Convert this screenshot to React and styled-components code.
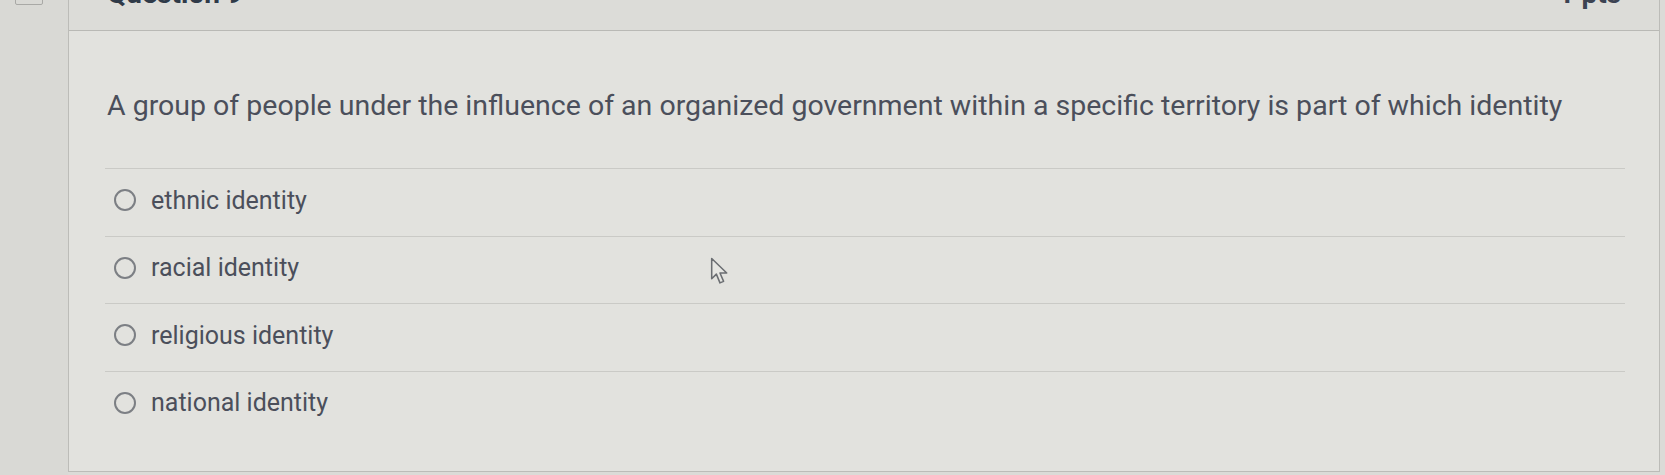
import React from "react";
import styled, { createGlobalStyle } from "styled-components";

const GlobalStyle = createGlobalStyle`
  html, body {
    margin: 0;
    padding: 0;
    background: #dbdbd7;
    font-family: Roboto, "Liberation Sans", sans-serif;
  }
`;

const answers = [
  "ethnic identity",
  "racial identity",
  "religious identity",
  "national identity",
];

export default function App() {
  return (
    <>
      <GlobalStyle />
      <Page>
        <Sidebar>
          <FlagBox />
        </Sidebar>
        <Card>
          <CardHeader>
            <Title>Question 9</Title>
            <Points>1 pts</Points>
          </CardHeader>
          <CardBody>
            <QuestionText>
              A group of people under the influence of an organized government
              within a specific territory is part of which identity
            </QuestionText>
            <AnswerList>
              {answers.map((a) => (
                <AnswerRow key={a}>
                  <Radio />
                  <AnswerLabel>{a}</AnswerLabel>
                </AnswerRow>
              ))}
            </AnswerList>
          </CardBody>
        </Card>
        <Cursor viewBox="0 0 20 28">
          <path
            d="M1.5 1.5 L1.5 21 L6 16.5 L9.5 25 L13 23.5 L9.5 15.5 L16 15.5 Z"
            fill="#e6e6e2"
            stroke="#6b6e72"
            strokeWidth="1.5"
            strokeLinejoin="round"
          />
        </Cursor>
      </Page>
    </>
  );
}

const Page = styled.div`
  position: relative;
  display: flex;
  height: 475px;
  overflow: hidden;
`;

const Sidebar = styled.div`
  width: 68px;
  flex-shrink: 0;
  background: #d9d9d5;
`;

const FlagBox = styled.div`
  width: 26px;
  height: 20px;
  margin: -17px 0 0 15px;
  border: 1.5px solid #a9a9a6;
  border-radius: 2px;
`;

const Card = styled.div`
  flex: 1;
  margin-right: 5px;
  margin-bottom: 3px;
  display: flex;
  flex-direction: column;
  border-left: 1.5px solid #bcbcb8;
  border-right: 1.5px solid #bcbcb8;
  border-bottom: 1.5px solid #bcbcb8;
  background: #e2e2de;
`;

const CardHeader = styled.div`
  height: 30px;
  flex-shrink: 0;
  display: flex;
  justify-content: space-between;
  align-items: flex-start;
  padding: 0 38px 0 38px;
  background: #dcdcd8;
  border-bottom: 1.5px solid #b9b9b5;
  overflow: hidden;
`;

const Title = styled.div`
  margin-top: -20px;
  font-size: 28px;
  line-height: 28px;
  font-weight: 700;
  color: #2f3a48;
`;

const Points = styled.div`
  margin-top: -20px;
  font-size: 28px;
  line-height: 28px;
  font-weight: 700;
  color: #3c4352;
`;

const CardBody = styled.div`
  padding: 58px 34px 0 36px;
`;

const QuestionText = styled.p`
  margin: 0 0 0 2px;
  font-size: 28.5px;
  line-height: 34px;
  color: #4b4f5b;
  white-space: nowrap;
`;

const AnswerList = styled.div`
  margin-top: 45px;
  display: flex;
  flex-direction: column;
`;

const AnswerRow = styled.div`
  height: 67.5px;
  display: flex;
  align-items: center;
  gap: 15px;
  padding: 0 0 4px 9px;
  box-sizing: border-box;
  border-top: 1.5px solid #cacac6;
`;

const Radio = styled.span`
  width: 18px;
  height: 18px;
  border-radius: 50%;
  border: 2px solid #7c7f84;
  flex-shrink: 0;
`;

const AnswerLabel = styled.span`
  font-size: 25px;
  color: #4b4f5b;
`;

const Cursor = styled.svg`
  position: absolute;
  left: 710px;
  top: 257px;
  width: 21px;
  height: 29px;
`;
